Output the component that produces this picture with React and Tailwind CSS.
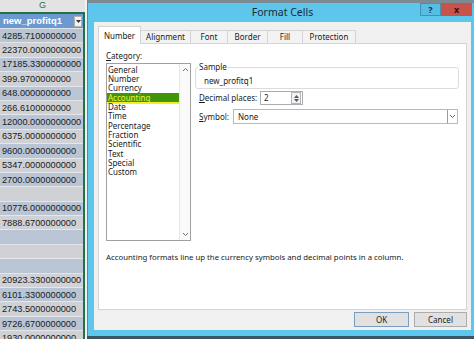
import React from 'react';

const cells = [
  '4285.7100000000', '22370.0000000000', '17185.3300000000', '399.9700000000',
  '648.0000000000', '266.6100000000', '12000.0000000000', '6375.0000000000',
  '9600.0000000000', '5347.0000000000', '2700.0000000000', '',
  '10776.0000000000', '7888.6700000000', '', '', '',
  '20923.3300000000', '6101.3300000000', '2743.5000000000', '9726.6700000000',
  '1930.0000000000',
];

const categories = [
  'General', 'Number', 'Currency', 'Accounting', 'Date', 'Time', 'Percentage',
  'Fraction', 'Scientific', 'Text', 'Special', 'Custom',
];

const tabs = [
  { label: 'Number', w: 'w-[43px]' },
  { label: 'Alignment', w: 'w-[50px]' },
  { label: 'Font', w: 'w-[37px]' },
  { label: 'Border', w: 'w-[40px]' },
  { label: 'Fill', w: 'w-[35px]' },
  { label: 'Protection', w: 'w-[53px]' },
];

function Chevron({ up }) {
  return (
    <svg width="7" height="5" viewBox="0 0 7 5" fill="none">
      <path d={up ? 'M1 4 L3.5 1.5 L6 4' : 'M1 1 L3.5 3.5 L6 1'} stroke="#6b6b6b" strokeWidth="1" />
    </svg>
  );
}

function SheetColumn() {
  return (
    <div className="w-[85px] shrink-0 flex flex-col font-['Liberation_Sans',sans-serif]">
      <div className="h-[14px] shrink-0 bg-[#e3e3e3] border-b-2 border-[#217346] flex items-center justify-center text-[9px] text-[#217346]">
        G
      </div>
      <div className="flex-1 flex flex-col border-r-2 border-[#217346] overflow-hidden">
        <div className="h-[15px] shrink-0 bg-[#6c99d0] flex items-center justify-between pl-[3px] pr-[1px] border-b border-[#dfe4ea]">
          <span className="text-[9.5px] font-bold text-white">new_profitq1</span>
          <div className="w-[8px] h-[11px] bg-[#f4f4f4] border border-[#b0b0b0] flex items-center justify-center">
            <svg width="5" height="3" viewBox="0 0 5 3"><path d="M0 0 H5 L2.5 3 Z" fill="#333" /></svg>
          </div>
        </div>
        {cells.map((v, i) => (
          <div
            key={i}
            className={`h-[14.4px] shrink-0 flex items-center pl-[2px] border-b border-[#e4e6ea] text-[9.2px] leading-[12px] text-[#1a1a1a] ${i % 2 === 0 ? 'bg-[#b9c5d5]' : 'bg-[#cfd1d4]'}`}
          >
            {v}
          </div>
        ))}
      </div>
    </div>
  );
}

function CategoryList() {
  return (
    <div className="w-[85px] h-[178px] border border-[#a0a0a0] bg-white flex">
      <div className="flex-1 pt-[0.5px]">
        {categories.map(c => (
          <div
            key={c}
            className={`h-[9.35px] leading-[9.35px] pl-[1px] ${c === 'Accounting' ? 'bg-[#41950a] text-[#e9f53c] shadow-[0_2px_0_#eef21f]' : 'text-[#1a1a1a]'}`}
          >
            {c}
          </div>
        ))}
      </div>
      <div className="w-[11px] border-l border-[#e6e6e6] bg-[#fafafa] flex flex-col justify-between items-center py-[3px]">
        <Chevron up />
        <Chevron />
      </div>
    </div>
  );
}

function FormatPanel() {
  return (
    <div className="flex-1 mx-[4px] bg-white border border-[#d4d4d4] px-[7px] pt-[5px] flex flex-col">
      <div className="flex">
        <div className="flex flex-col">
          <div className="h-[13px] leading-[13px] mb-[1px]">
            <span className="underline">C</span>ategory:
          </div>
          <CategoryList />
        </div>
        <div className="ml-[4px] w-[264px] flex flex-col">
          <fieldset className="mt-[13px] border border-[#dcdcdc] rounded-[3px] pl-[2px] pb-[2px]">
            <legend className="px-[1px] leading-[10px]">Sample</legend>
            <div className="pt-[4px] pl-[6px] leading-[10px]">new_profitq1</div>
          </fieldset>
          <div className="mt-[2px] h-[14px] flex items-center pl-[4px]">
            <div className="w-[61px]">
              <span className="underline">D</span>ecimal places:
            </div>
            <div className="w-[43px] h-[14px] border border-[#abadb3] bg-white flex items-center">
              <span className="flex-1 pl-[3px]">2</span>
              <div className="w-[10px] h-[12px] mr-px border border-[#b5b5b5] bg-[#f2f2f2] flex flex-col items-center justify-center gap-[1px]">
                <svg width="5" height="3" viewBox="0 0 5 3"><path d="M0 3 L2.5 0 L5 3 Z" fill="#555" /></svg>
                <svg width="5" height="3" viewBox="0 0 5 3"><path d="M0 0 H5 L2.5 3 Z" fill="#555" /></svg>
              </div>
            </div>
          </div>
          <div className="mt-[4px] h-[15px] flex items-center pl-[4px]">
            <div className="w-[34px]">
              <span className="underline">S</span>ymbol:
            </div>
            <div className="w-[225px] h-[15px] border border-[#b9b9b9] bg-white flex items-center">
              <span className="flex-1 pl-[4px]">None</span>
              <div className="w-[10px] h-[13px] border-l border-[#9a9a9a] flex items-center justify-center">
                <Chevron />
              </div>
            </div>
          </div>
        </div>
      </div>
      <div className="mt-[11px] leading-[10px] text-[7.8px]">
        Accounting formats line up the currency symbols and decimal points in a column.
      </div>
    </div>
  );
}

function Dialog() {
  return (
    <div className="flex-1 flex flex-col">
      <div className="h-[336px] flex flex-col bg-[#5dc6ec] border-l border-t-[3px] border-l-[#6f808c] border-t-[#7c8a94]">
        <div className="h-[19px] shrink-0 grid grid-cols-[1fr_auto_1fr]">
          <div />
          <div className="text-[10.5px] leading-[19px] text-[#1d2a35]">Format Cells</div>
          <div className="flex justify-end items-start pr-[5px]">
            <div className="w-[21px] h-[13px] bg-[#58bde2] border border-[#3f95b8] flex items-center justify-center text-[9px] font-bold text-[#1d2f4a] leading-none">
              ?
            </div>
            <div className="w-[31px] h-[13px] bg-[#c9534a] flex items-center justify-center text-[9px] font-bold text-[#2b1210] leading-none">
              x
            </div>
          </div>
        </div>
        <div className="flex-1 mx-[6px] mb-[6px] bg-[#f0f0f0] flex flex-col pt-[4px] text-[8px] text-[#1a1a1a]">
          <div className="flex items-end px-[4px] -mb-px relative z-10">
            {tabs.map((t, i) => (
              <div
                key={t.label}
                className={`${t.w} flex items-center justify-center border-t border-r border-[#d4d4d4] ${i === 0 ? 'h-[18px] bg-white border-l' : 'h-[14px] bg-[#f3f3f3] border-b'}`}
              >
                {t.label}
              </div>
            ))}
          </div>
          <FormatPanel />
          <div className="h-[20px] shrink-0 flex justify-end items-start pt-[2px] pr-[4px] gap-[5px]">
            <div className="w-[55px] h-[15px] bg-[#e1e1e1] border border-[#7d9dbd] flex items-center justify-center">OK</div>
            <div className="w-[53px] h-[15px] bg-[#e1e1e1] border border-[#adadad] flex items-center justify-center">Cancel</div>
          </div>
        </div>
      </div>
      <div className="flex-1 bg-[#3b5564]" />
    </div>
  );
}

export default function App() {
  return (
    <div className="w-[474px] h-[339px] overflow-hidden flex bg-[#efefef] font-['Noto_Sans',sans-serif]">
      <SheetColumn />
      <div className="w-[2px] shrink-0 bg-[#f2f2f2]" />
      <Dialog />
    </div>
  );
}
